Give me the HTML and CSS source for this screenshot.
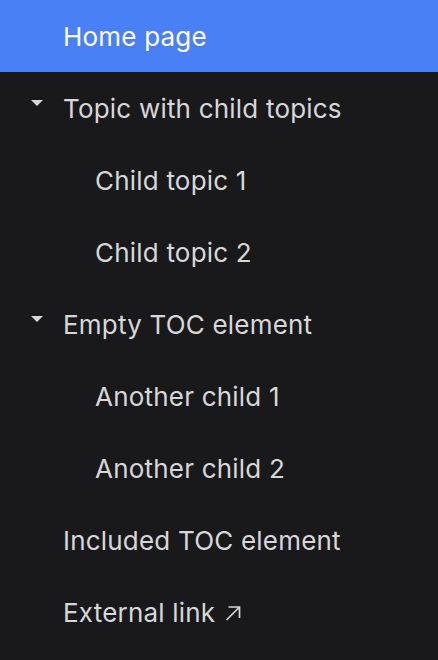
FILE: index.html
```html
<!DOCTYPE html>
<html>
<head>
<meta charset="utf-8">
<link rel="stylesheet" href="styles.css">
</head>
<body>
<nav class="toc">
  <a class="item active">Home page</a>
  <a class="item"><span class="caret"></span>Topic with child topics</a>
  <a class="item child">Child topic 1</a>
  <a class="item child">Child topic 2</a>
  <a class="item"><span class="caret"></span>Empty TOC element</a>
  <a class="item child">Another child 1</a>
  <a class="item child">Another child 2</a>
  <a class="item">Included TOC element</a>
  <a class="item">External link<svg class="ext" width="16" height="16" viewBox="0 0 16 16"><path d="M1.5 15 L14 2.5 M3.5 2 H14.5 V13" fill="none" stroke="currentColor" stroke-width="1.7"/></svg></a>
</nav>
</body>
</html>
```
FILE: styles.css
```css
html, body {
  margin: 0;
  padding: 0;
  background: #19191c;
}
.toc {
  display: flex;
  flex-direction: column;
  font-family: Inter, "Noto Sans", sans-serif;
  font-size: 26px;
  font-weight: 370;
  letter-spacing: 0.2px;
  color: #d7d7d9;
}
.item {
  position: relative;
  display: flex;
  align-items: center;
  height: 72px;
  padding-left: 63px;
  box-sizing: border-box;
}
.item.active {
  background: #4a80f5;
  color: #ffffff;
}
.item.child {
  padding-left: 95px;
}
.caret {
  position: absolute;
  left: 31px;
  top: 28px;
  width: 0;
  height: 0;
  border-left: 6px solid transparent;
  border-right: 6px solid transparent;
  border-top: 6.5px solid #d7d7d9;
}
.ext {
  margin-left: 10px;
  margin-top: 2px;
}
```
